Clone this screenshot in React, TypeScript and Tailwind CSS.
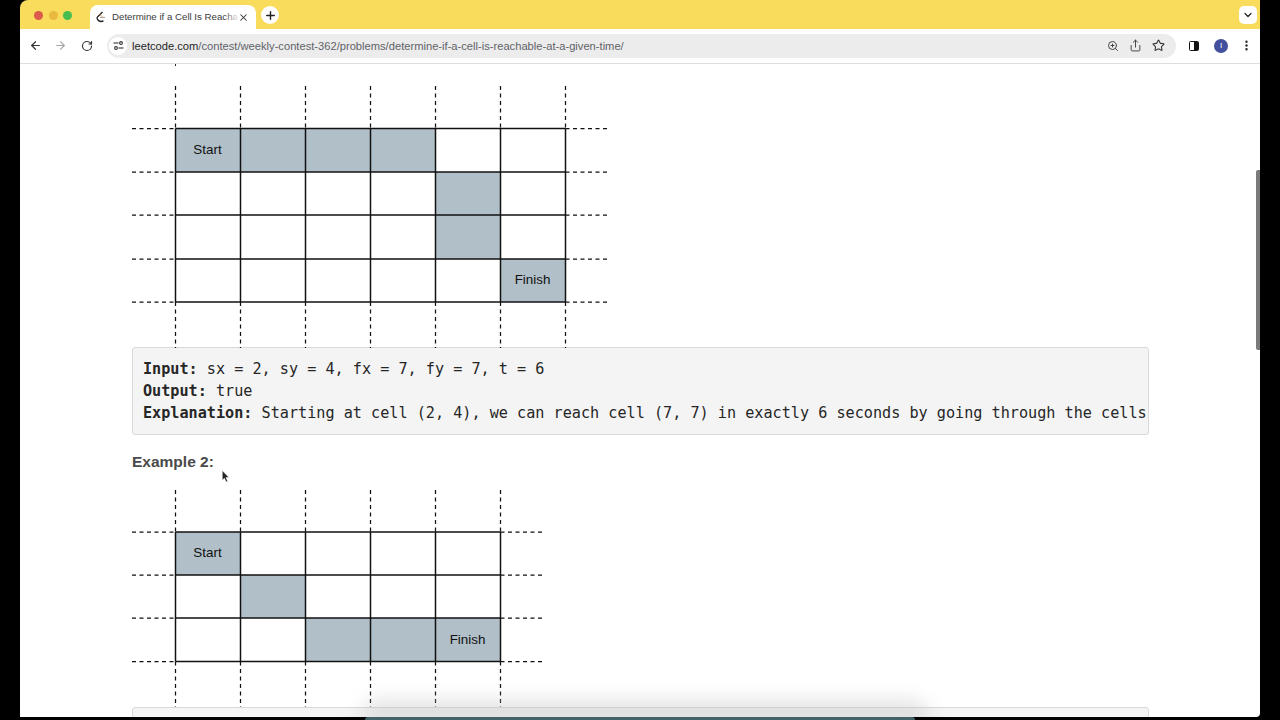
import { ArrowLeft, ArrowRight, ChevronDown, EllipsisVertical, Plus, RotateCw, Share, Star, X, ZoomIn } from 'lucide-react';

const sans = 'font-["Liberation_Sans",Arial,sans-serif]';

interface DiagramProps {
  width: number;
  height: number;
  cols: number;
  rowLines: number[];
  vTop: number;
  vBottom: number;
  shaded: [number, number][];
  labels: { text: string; col: number; row: number }[];
}

const CELL = 65;
const LEFT = 43.5;

function Diagram({ width, height, cols, rowLines, vTop, vBottom, shaded, labels }: DiagramProps) {
  const xs = Array.from({ length: cols + 1 }, (_, i) => LEFT + i * CELL);
  const right = xs[xs.length - 1];
  const top = rowLines[0];
  const bottom = rowLines[rowLines.length - 1];

  return (
    <svg width={width} height={height} className="block overflow-visible">
      {shaded.map(([c, r]) => (
        <rect
          key={`${c}-${r}`}
          x={xs[c]}
          y={rowLines[r]}
          width={CELL}
          height={rowLines[r + 1] - rowLines[r]}
          fill="#b0bfc8"
        />
      ))}
      {xs.map((x) => (
        <g key={x} stroke="#111">
          <line x1={x} x2={x} y1={vTop} y2={top} strokeWidth="1.25" strokeDasharray="4 3.5" />
          <line x1={x} x2={x} y1={top} y2={bottom} strokeWidth="1.5" />
          <line x1={x} x2={x} y1={bottom} y2={vBottom} strokeWidth="1.25" strokeDasharray="4 3.5" />
        </g>
      ))}
      {rowLines.map((y) => (
        <g key={y} stroke="#111">
          <line x1={0} x2={LEFT} y1={y} y2={y} strokeWidth="1.25" strokeDasharray="4 3.5" />
          <line x1={LEFT} x2={right} y1={y} y2={y} strokeWidth="1.5" />
          <line x1={right} x2={width} y1={y} y2={y} strokeWidth="1.25" strokeDasharray="4 3.5" />
        </g>
      ))}
      {labels.map((l) => (
        <text
          key={l.text}
          x={xs[l.col] + CELL / 2 - 0.5}
          y={(rowLines[l.row] + rowLines[l.row + 1]) / 2 + 3.8}
          textAnchor="middle"
          fontSize="13.4"
          fill="#111"
          fontFamily="Liberation Sans, Arial, sans-serif"
        >
          {l.text}
        </text>
      ))}
    </svg>
  );
}

function TopBar() {
  return (
    <>
      <div className="h-[29px] shrink-0 bg-[#f9dc5c] rounded-tl-[8px] flex items-end relative">
        <div className="flex items-center gap-[5.5px] ml-[14px] mb-[9.5px]">
          <span className="w-[9px] h-[9px] rounded-full bg-[#dc5a4b]" />
          <span className="w-[9px] h-[9px] rounded-full bg-[#e9b93f]" />
          <span className="w-[9px] h-[9px] rounded-full bg-[#45bd4f]" />
        </div>
        <div className={`relative ml-[18px] w-[166px] h-[24px] bg-white rounded-t-[8px] flex items-center pl-[5px] pr-[7px] ${sans}`}>
          <svg width="12" height="12" viewBox="0 0 12 12" fill="none" className="shrink-0">
            <path d="M7.5 1 L2.5 6 Q1.5 7 2.5 8.5 Q4 10.5 6 10.5 L8.5 10" stroke="#222" strokeWidth="1.3" />
            <path d="M5 6.5 H10" stroke="#aaa" strokeWidth="1.2" />
            <path d="M5 3.5 L7.5 6" stroke="#e8a33d" strokeWidth="1" />
          </svg>
          <span className="ml-[5px] whitespace-nowrap text-[9.7px] text-[#3c3c3c]">Determine if a Cell Is Reacha</span>
          <span className="absolute left-[134px] top-0 h-full w-[16px] bg-gradient-to-r from-transparent to-white" />
          <X size={11} strokeWidth={2.2} className="relative ml-auto text-[#333]" />
        </div>
        <div className="ml-[5px] mb-[5px] w-[18px] h-[18px] rounded-full bg-white flex items-center justify-center">
          <Plus size={13} strokeWidth={2.6} className="text-[#222]" />
        </div>
        <div className="absolute right-[3px] top-[6px] w-[18px] h-[18px] rounded-[5px] bg-white flex items-center justify-center">
          <ChevronDown size={12} strokeWidth={2.4} className="text-[#222]" />
        </div>
      </div>
      <div className="h-[35px] shrink-0 bg-white border-b border-[#dedede] flex items-center pb-[1px]">
        <ArrowLeft size={13} strokeWidth={2.2} className="ml-[9px] text-[#333]" />
        <ArrowRight size={13} strokeWidth={2} className="ml-[12px] text-[#a3a3a3]" />
        <RotateCw size={12} strokeWidth={2.3} className="ml-[14px] text-[#333]" />
        <div className="ml-[14px] w-[1069px] h-[24px] rounded-full bg-[#ececec] flex items-center pl-[2px] pr-[11px]">
          <div className="w-[18px] h-[18px] rounded-full bg-white flex items-center justify-center">
            <svg width="11" height="11" viewBox="0 0 11 11" fill="none" stroke="#333" strokeWidth="1.1">
              <path d="M0.5 3 H5.5" />
              <circle cx="8" cy="3" r="1.4" />
              <path d="M10.5 8 H5.5" />
              <circle cx="3" cy="8" r="1.4" />
            </svg>
          </div>
          <span className={`pl-[5px] mt-[1px] text-[11.17px] whitespace-nowrap text-[#5f6368] ${sans}`}>
            <span className="text-[#1f1f1f]">leetcode.com</span>/contest/weekly-contest-362/problems/determine-if-a-cell-is-reachable-at-a-given-time/
          </span>
          <ZoomIn size={12} strokeWidth={2} className="ml-auto text-[#444]" />
          <Share size={13} strokeWidth={1.8} className="ml-[10px] text-[#444]" />
          <Star size={13} strokeWidth={2} className="ml-[10px] text-[#333]" />
        </div>
        <div className="ml-[13px] w-[10px] h-[10px] border-[1.5px] border-[#111] rounded-[1.5px] flex justify-end">
          <span className="w-[4px] bg-[#111]" />
        </div>
        <div className={`ml-[15px] w-[14px] h-[14px] rounded-full bg-[#42509e] flex items-center justify-center text-[8px] text-white ${sans}`}>
          I
        </div>
        <EllipsisVertical size={13} strokeWidth={2.4} className="ml-[12px] text-[#222]" />
      </div>
    </>
  );
}

const codeClass =
  'mt-[1px] rounded-[3px] border border-[#d9d9d9] bg-[#f4f4f4] pl-[10px] pt-[10px] pb-[10px] font-["DejaVu_Sans_Mono",monospace] text-[15.17px] leading-[22px] text-[#262626] overflow-hidden whitespace-pre';

export default function App() {
  return (
    <div className="relative h-screen w-screen overflow-hidden bg-black px-[20px] pb-[3px]">
      <div className="h-full flex flex-col overflow-hidden rounded-br-[4px]">
        <TopBar />
        <main className="relative flex-1 overflow-hidden bg-white pl-[112px] pr-[111px]">
          <div className="absolute left-[154.5px] top-0 w-[1.5px] h-[2px] bg-[#222]" />
          <Diagram
            width={478}
            height={282}
            cols={6}
            rowLines={[64.5, 108, 151, 195, 238]}
            vTop={22}
            vBottom={284}
            shaded={[[0, 0], [1, 0], [2, 0], [3, 0], [4, 1], [4, 2], [5, 3]]}
            labels={[
              { text: 'Start', col: 0, row: 0 },
              { text: 'Finish', col: 5, row: 3 },
            ]}
          />
          <pre className={codeClass}>
            <b>Input:</b> sx = 2, sy = 4, fx = 7, fy = 7, t = 6{'\n'}
            <b>Output:</b> true{'\n'}
            <b>Explanation:</b> Starting at cell (2, 4), we can reach cell (7, 7) in exactly 6 seconds by going through the cells
          </pre>
          <p className={`mt-[16px] h-[22px] leading-[22px] text-[15.5px] font-bold text-[#4a4a4a] ${sans}`}>Example 2:</p>
          <Diagram
            width={413}
            height={233}
            cols={5}
            rowLines={[59, 102, 145, 188.5]}
            vTop={17}
            vBottom={234}
            shaded={[[0, 0], [1, 1], [2, 2], [3, 2], [4, 2]]}
            labels={[
              { text: 'Start', col: 0, row: 0 },
              { text: 'Finish', col: 4, row: 2 },
            ]}
          />
          <pre className={codeClass}> </pre>
          {/* dock shadow coming up from the bottom of the screen */}
          <div className="absolute bottom-[-6px] left-[340px] w-[570px] h-[24px] bg-[#bdbdbd]/40 blur-[9px] rounded-t-[20px]" />
          {/* mouse pointer */}
          <svg width="9" height="13" viewBox="0 0 8 12" className="absolute left-[201px] top-[406px]">
            <path d="M1 0.5 V9.5 L3 7.6 L4.6 11 L6 10.3 L4.5 7 H7.2 Z" fill="#222" stroke="#fff" strokeWidth="0.5" />
          </svg>
          {/* scrollbar */}
          <div className="absolute right-0 top-[106px] h-[180px] w-[4px] rounded-l-[2px] bg-[#7a7a7a]" />
        </main>
      </div>
      <div className="absolute bottom-0 left-[365px] w-[550px] h-[3px] rounded-t-[4px] bg-[#44616a]" />
    </div>
  );
}
